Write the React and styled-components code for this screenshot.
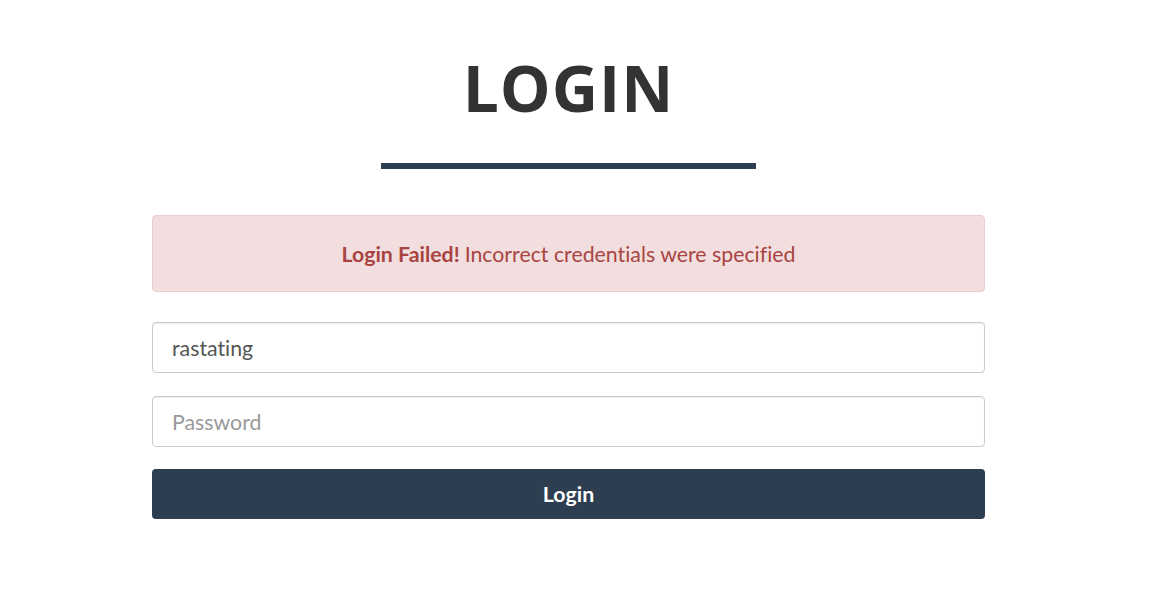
import React from 'react'
import styled, { createGlobalStyle } from 'styled-components'

const Global = createGlobalStyle`
  body {
    margin: 0;
    background: #fff;
    font-family: 'Lato', 'Liberation Sans', sans-serif;
    font-variant-ligatures: none;
  }
`

const Page = styled.div`
  width: 833px;
  margin-left: 152px;
  padding-top: 48px;
`

const Heading = styled.div`
  display: flex;
  flex-direction: column;
  align-items: center;
`

const Title = styled.h1`
  margin: 0;
  font-family: 'Open Sans', 'DejaVu Sans', sans-serif;
  font-weight: 700;
  font-size: 64px;
  line-height: 80px;
  color: #333;
  letter-spacing: 1px;
`

const Divider = styled.hr`
  width: 375px;
  height: 6px;
  margin: 35px 0 0;
  border: none;
  background: #2c3e50;
`

const Alert = styled.div`
  margin-top: 46px;
  height: 77px;
  box-sizing: border-box;
  display: flex;
  align-items: center;
  justify-content: center;
  background: #f2dede;
  border: 1px solid #ebccd1;
  border-radius: 4px;
  color: #a94442;
  font-size: 21.3px;

  strong {
    font-weight: 700;
    margin-right: 5px;
  }
`

const Form = styled.form`
  margin-top: 30px;
  display: flex;
  flex-direction: column;
  gap: 23px;
`

const Input = styled.input`
  height: 51px;
  box-sizing: border-box;
  padding: 0 19px;
  border: 1px solid #ccc;
  border-radius: 4px;
  box-shadow: inset 0 1px 1px rgba(0, 0, 0, 0.075);
  font-family: 'Lato', sans-serif;
  font-variant-ligatures: none;
  font-size: 21.3px;
  color: #555;
  outline: none;

  &::placeholder {
    color: #999;
  }
`

const Button = styled.button`
  height: 50px;
  margin-top: -1px;
  border: none;
  border-radius: 4px;
  background: #2c3e50;
  color: #fff;
  font-family: 'Lato', sans-serif;
  font-weight: 700;
  font-size: 21.3px;
  cursor: pointer;
`

export default function App() {
  return (
    <>
      <Global />
      <Page>
        <Heading>
          <Title>LOGIN</Title>
          <Divider />
        </Heading>
        <Alert>
          <strong>Login Failed!</strong> Incorrect credentials were specified
        </Alert>
        <Form onSubmit={(e) => e.preventDefault()}>
          <Input type="text" defaultValue="rastating" />
          <Input type="password" placeholder="Password" />
          <Button type="submit">Login</Button>
        </Form>
      </Page>
    </>
  )
}
